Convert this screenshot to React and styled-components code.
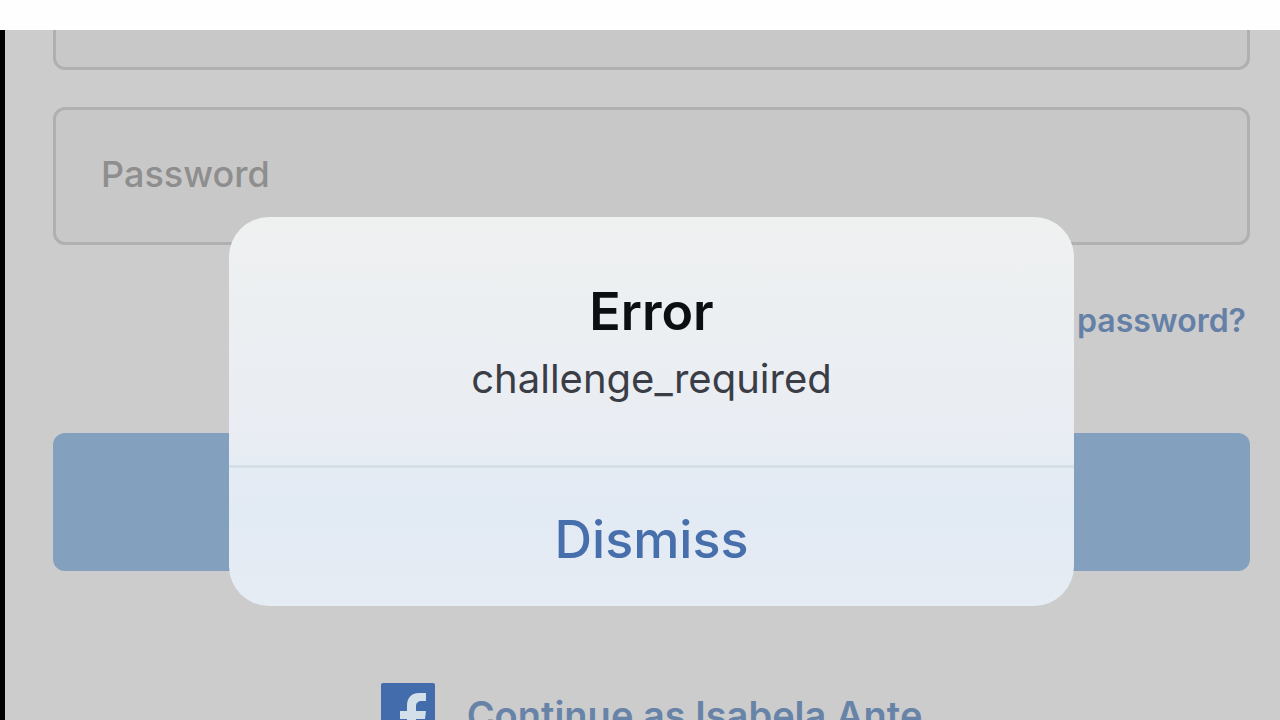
import React, { useState } from "react";
import styled, { createGlobalStyle } from "styled-components";

const App = () => {
  const [password, setPassword] = useState("");
  const [open, setOpen] = useState(true);

  return (
    <Page>
      <GlobalStyle />
      <Screen>
        <Form onSubmit={(e) => e.preventDefault()}>
          <UsernameInput type="text" aria-label="Username" />
          <PasswordInput
            type="password"
            aria-label="Password"
            placeholder="Password"
            value={password}
            onChange={(e) => setPassword(e.target.value)}
          />
          <ForgotLink href="#forgot">password?</ForgotLink>
          <LoginButton type="submit" aria-label="Log in" />
          <FacebookButton type="button">
            <FacebookIcon viewBox="0 0 54 54" aria-hidden="true">
              <rect width="54" height="54" rx="2" fill="#426cab" />
              <path
                d="M26 54V36h-7v-8h7v-5c0-9 5-13 12-13h7v8h-4c-4 0-6 2-6 5v5h10l-1 8h-9v18z"
                fill="#d3e0ea"
              />
            </FacebookIcon>
            Continue as Isabela Ante
          </FacebookButton>
        </Form>
        {open && (
          <Overlay>
            <Alert role="alertdialog" aria-labelledby="title" aria-describedby="message">
              <AlertBody>
                <Title id="title">Error</Title>
                <Message id="message">challenge_required</Message>
              </AlertBody>
              <DismissButton type="button" onClick={() => setOpen(false)}>
                Dismiss
              </DismissButton>
            </Alert>
          </Overlay>
        )}
      </Screen>
    </Page>
  );
};

const GlobalStyle = createGlobalStyle`
  * {
    box-sizing: border-box;
  }

  body {
    margin: 0;
    background-color: #fefefe;
    font-family: Inter, "Liberation Sans", sans-serif;
  }

  button,
  input {
    font-family: inherit;
  }
`;

const Page = styled.div`
  display: flex;
  flex-direction: column;
  height: 100vh;
  padding-top: 30px;
  overflow: hidden;
`;

const Screen = styled.main`
  position: relative;
  flex: 1;
  min-height: 0;
  overflow: hidden;
  border-left: 5px solid #000;
  background-color: #cccccc;
`;

const Form = styled.form`
  display: flex;
  flex-direction: column;
  padding: 0 30px 0 48px;
`;

const Input = styled.input`
  width: 100%;
  padding: 0 45px;
  border: 3px solid #b0b0b0;
  border-radius: 12px;
  outline: none;
  background-color: #c8c8c8;
  color: #444;
  font-size: 36px;

  &::placeholder {
    color: #8e8e8e;
    font-weight: 500;
    opacity: 1;
  }
`;

/* Scrolled under the top bar, only its lower edge shows */
const UsernameInput = styled(Input)`
  height: 40px;
  border-top: none;
  border-radius: 0 0 12px 12px;
`;

const PasswordInput = styled(Input)`
  height: 138px;
  margin-top: 37px;
  padding-bottom: 4px;
`;

const ForgotLink = styled.a`
  align-self: flex-end;
  margin: 56px 4px 0 0;
  color: #6580a6;
  font-size: 32px;
  font-weight: 600;
  line-height: 40px;
  text-decoration: none;
`;

const LoginButton = styled.button`
  height: 138px;
  margin-top: 92px;
  border: none;
  border-radius: 12px;
  background-color: #83a1bf;
`;

const FacebookButton = styled.button`
  display: flex;
  align-items: flex-start;
  align-self: center;
  gap: 32px;
  margin-top: 112px;
  padding: 0;
  border: none;
  background: none;
  color: #6883a8;
  font-size: 38px;
  font-weight: 600;
  line-height: 64px;
  white-space: nowrap;
`;

const FacebookIcon = styled.svg`
  width: 54px;
  height: 54px;
`;

const Overlay = styled.div`
  position: absolute;
  inset: 0;
  display: flex;
  align-items: flex-start;
  justify-content: center;
  padding: 187px 30px 0 48px;
`;

const Alert = styled.section`
  display: flex;
  flex-direction: column;
  width: 70.6%;
  overflow: hidden;
  border-radius: 40px;
  background: linear-gradient(#eff1f1, #e9edf3 55%, #e2eaf4 75%, #e6ecf3);
`;

const AlertBody = styled.div`
  padding: 64px 32px 58px;
  text-align: center;
`;

const Title = styled.h1`
  margin: 0;
  color: #0c0f12;
  font-size: 52px;
  font-weight: 600;
  line-height: 62px;
`;

const Message = styled.p`
  margin: 8px 0 0;
  color: #3a3d46;
  font-size: 40px;
  line-height: 56px;
`;

const DismissButton = styled.button`
  height: 141px;
  padding: 4px 0 0;
  border: none;
  border-top: 3px solid #d5dfe8;
  background: none;
  color: #466fac;
  font-size: 52px;
  font-weight: 500;
  cursor: pointer;
`;

export default App;
